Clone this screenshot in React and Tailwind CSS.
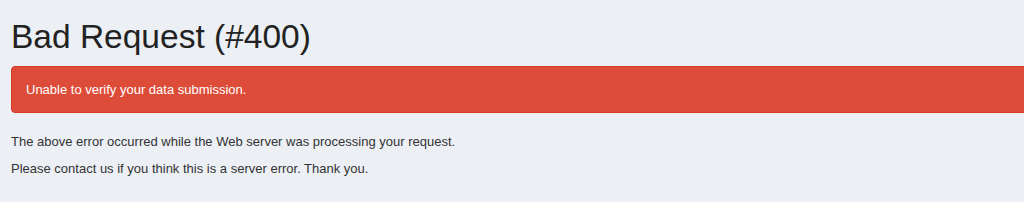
import React from 'react';

const App = () => {
  return (
    <div className="w-full h-[202px] bg-[#ecf0f5] overflow-hidden font-['Liberation_Sans',Arial,sans-serif] text-[#333]">
      <div className="pl-[11px] pt-[19px]">
        {/* Titre */}
        <h1 className="text-[33.5px] leading-[36px] text-[#222] m-0">Bad Request (#400)</h1>

        {/* Message d'erreur */}
        <div className="mt-[11px] w-[1030px] bg-[#dd4b39] border border-[#d73925] rounded-[4px] px-[14px] py-[14px] text-white text-[13px] leading-[17px]">
          Unable to verify your data submission.
        </div>

        <p className="mt-[20px] text-[13px] leading-[17px]">
          The above error occurred while the Web server was processing your request.
        </p>
        <p className="mt-[10px] text-[13px] leading-[17px]">
          Please contact us if you think this is a server error. Thank you.
        </p>
      </div>
    </div>
  );
};

export default App;
